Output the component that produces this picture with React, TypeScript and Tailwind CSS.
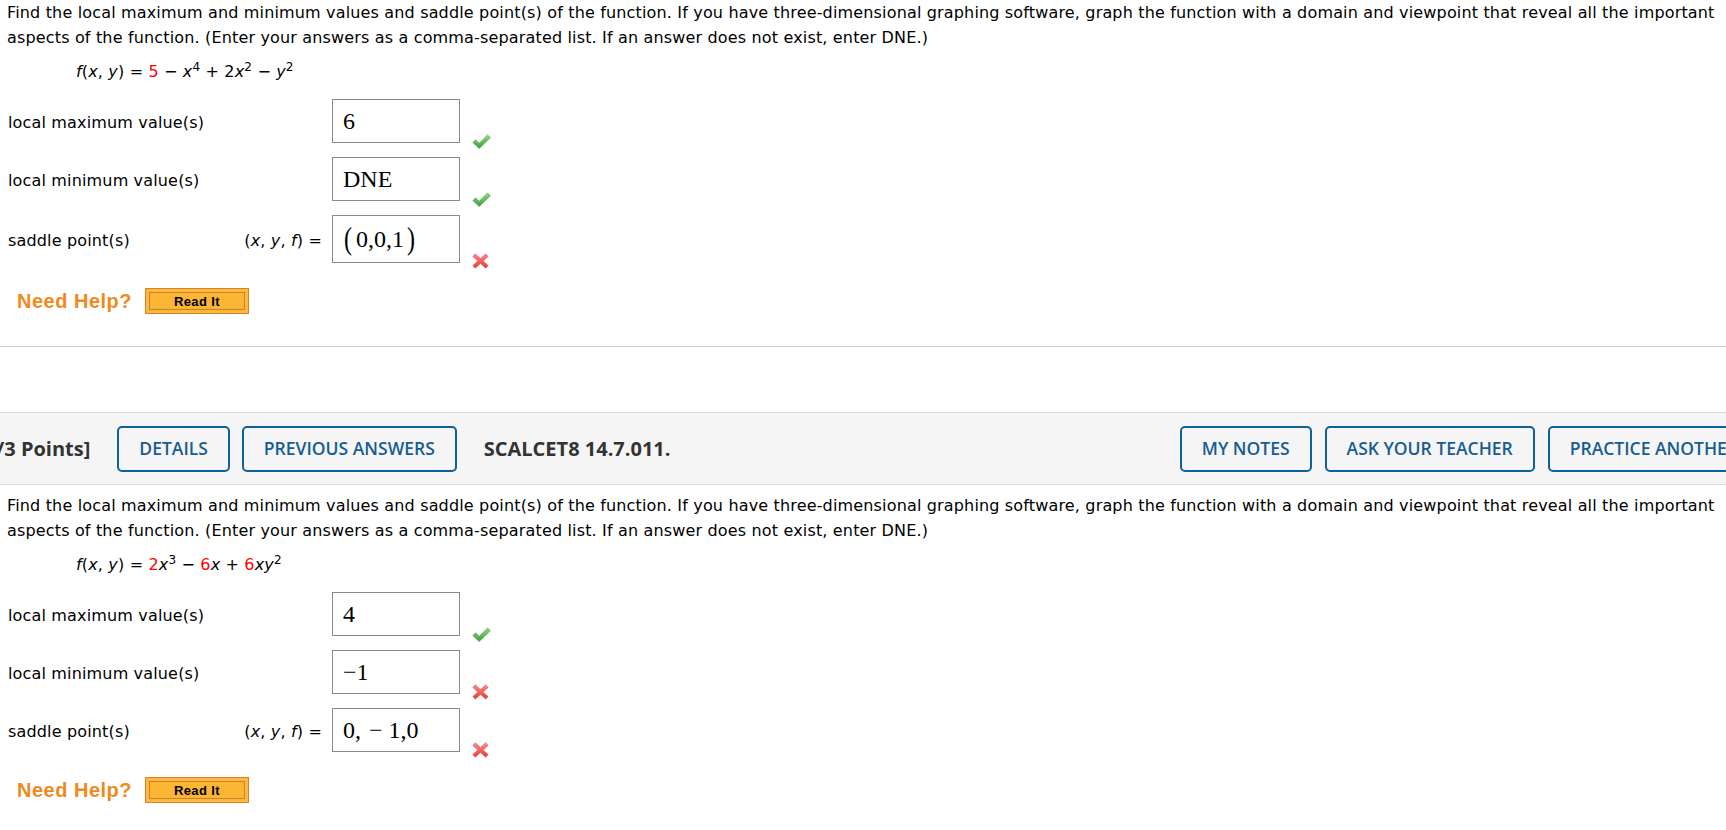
import type { ReactNode } from "react";

// ─── Small pieces ────────────────────────────────────────────────────────────

const body = "font-['DejaVu_Sans',Verdana,sans-serif]";
const math = "font-['Liberation_Serif','Times_New_Roman',serif]";

function CheckMark() {
  return (
    <svg width="19" height="15" viewBox="0 0 19 15" className="block">
      <defs>
        <linearGradient id="chk" x1="0" y1="0" x2="0" y2="1">
          <stop offset="0" stopColor="#93d883" />
          <stop offset="1" stopColor="#3e9c3e" />
        </linearGradient>
      </defs>
      <path
        d="M0.8 8.6 L3.6 5.8 L7.2 9.2 L15.6 0.9 L18.4 3.7 L7.2 14.6 Z"
        fill="url(#chk)"
        stroke="#4f9f48"
        strokeWidth="0.6"
        strokeLinejoin="round"
      />
    </svg>
  );
}

function CrossMark() {
  return (
    <svg width="17" height="16" viewBox="0 0 17 16" className="block">
      <defs>
        <linearGradient id="crs" x1="0" y1="0" x2="0" y2="1">
          <stop offset="0" stopColor="#ff8a8a" />
          <stop offset="1" stopColor="#e23c3c" />
        </linearGradient>
      </defs>
      <path
        d="M0.8 3.4 L3.3 0.8 L8.5 5.6 L13.7 0.8 L16.2 3.4 L11.2 8 L16.2 12.6 L13.7 15.2 L8.5 10.4 L3.3 15.2 L0.8 12.6 L5.8 8 Z"
        fill="url(#crs)"
        stroke="#e04a4a"
        strokeWidth="0.5"
        strokeLinejoin="round"
      />
    </svg>
  );
}

const I = ({ children }: { children: ReactNode }) => <span className="italic">{children}</span>;
const R = ({ children }: { children: ReactNode }) => <span className="text-[#ff0000]">{children}</span>;

function AnswerRow({
  label,
  prefix,
  ok,
  tall,
  children,
}: {
  label: string;
  prefix?: boolean;
  ok: boolean;
  tall?: boolean;
  children: ReactNode;
}) {
  return (
    <div className="flex items-center">
      <div className="w-[325px] flex items-center justify-between pr-[10px] pt-[3px]">
        <span className="pl-[1px]">{label}</span>
        {prefix && (
          <span>
            (<I>x</I>, <I>y</I>, <I>f</I>) =
          </span>
        )}
      </div>
      <div
        className={`w-[128px] ${tall ? "h-[48px]" : "h-[44px]"} border border-[#8a8a8a] bg-white flex items-center pl-[10px] ${math} text-[24px] tracking-normal text-black leading-none whitespace-nowrap`}
      >
        {children}
      </div>
      <div className="self-end mb-[-6px] ml-[12px]">{ok ? <CheckMark /> : <CrossMark />}</div>
    </div>
  );
}

function NeedHelp() {
  return (
    <div className="mt-[25px] flex items-center h-[26px]">
      <span className="ml-[10px] font-['Liberation_Sans',Arial,sans-serif] font-bold text-[20px] tracking-[0.5px] text-[#ef8a1c]">
        Need Help?
      </span>
      <div className="ml-[13px] w-[104px] h-[26px] border border-[#d9841e] bg-[#fcb843] p-[3px]">
        <div className="h-full border border-[#c98424] bg-[#fdb534] flex items-center justify-center font-['Liberation_Sans',Arial,sans-serif] font-bold text-[13px] tracking-[0.4px] text-black leading-none">
          Read It
        </div>
      </div>
    </div>
  );
}

function Prompt() {
  return (
    <p className="leading-[25px] whitespace-nowrap">
      Find the local maximum and minimum values and saddle point(s) of the function. If you have three-dimensional
      graphing software, graph the function with a domain and viewpoint that reveal all the important
      <br />
      aspects of the function. (Enter your answers as a comma-separated list. If an answer does not exist, enter DNE.)
    </p>
  );
}

function BandButton({ children }: { children: ReactNode }) {
  return (
    <div className="h-[46px] px-[20px] border-2 border-[#10609a] rounded-[5px] flex items-center text-[#175d91] text-[17.5px] font-semibold whitespace-nowrap shrink-0">
      {children}
    </div>
  );
}

// ─── Page ────────────────────────────────────────────────────────────────────

export default function App() {
  return (
    <div className={`w-[1726px] h-[830px] overflow-hidden bg-white text-black text-[16px] tracking-[0.16px] ${body}`}>
      {/* ── Question 1 ── */}
      <div className="pl-[7px]">
        <Prompt />
        <div className="mt-[9px] ml-[69px] leading-[25px]">
          <I>f</I>(<I>x</I>, <I>y</I>) = <R>5</R> − <I>x</I>
          <sup>4</sup> + 2<I>x</I>
          <sup>2</sup> − <I>y</I>
          <sup>2</sup>
        </div>
        <div className="mt-[15px] flex flex-col gap-[14px]">
          <AnswerRow label="local maximum value(s)" ok>
            6
          </AnswerRow>
          <AnswerRow label="local minimum value(s)" ok>
            DNE
          </AnswerRow>
          <AnswerRow label="saddle point(s)" prefix ok={false} tall>
            <span className="ml-[1px] inline-block scale-y-[1.28]">(</span>
            <span className="ml-[4px]">0,0,1</span>
            <span className="ml-[3px] inline-block scale-y-[1.28]">)</span>
          </AnswerRow>
        </div>
        <NeedHelp />
      </div>

      <div className="mt-[32px] border-b border-[#cfcfcf]" />

      {/* ── Question 2 header band ── */}
      <div className="mt-[65px] h-[73px] border-y border-[#dcdcdc] bg-[#f5f5f5] overflow-hidden tracking-normal">
        <div className="w-[1760px] h-full flex items-center font-['Open_Sans',sans-serif]">
          <span className="-ml-[4px] text-[20px] font-bold text-[#333] whitespace-nowrap">/3 Points]</span>
          <div className="ml-[27px] flex gap-[12px]">
            <BandButton>DETAILS</BandButton>
            <BandButton>PREVIOUS ANSWERS</BandButton>
          </div>
          <span className="ml-[27px] text-[20px] font-bold text-[#333] whitespace-nowrap">SCALCET8 14.7.011.</span>
          <div className="ml-auto flex gap-[13px]">
            <BandButton>MY NOTES</BandButton>
            <BandButton>ASK YOUR TEACHER</BandButton>
            <BandButton>PRACTICE ANOTHER</BandButton>
          </div>
        </div>
      </div>

      {/* ── Question 2 ── */}
      <div className="pl-[7px] pt-[8px]">
        <Prompt />
        <div className="mt-[9px] ml-[69px] leading-[25px]">
          <I>f</I>(<I>x</I>, <I>y</I>) = <R>2</R>
          <I>x</I>
          <sup>3</sup> − <R>6</R>
          <I>x</I> + <R>6</R>
          <I>xy</I>
          <sup>2</sup>
        </div>
        <div className="mt-[15px] flex flex-col gap-[14px]">
          <AnswerRow label="local maximum value(s)" ok>
            4
          </AnswerRow>
          <AnswerRow label="local minimum value(s)" ok={false}>
            −1
          </AnswerRow>
          <AnswerRow label="saddle point(s)" prefix ok={false}>
            0,<span className="ml-[8px]">−</span>
            <span className="ml-[6px]">1,0</span>
          </AnswerRow>
        </div>
        <NeedHelp />
      </div>
    </div>
  );
}
